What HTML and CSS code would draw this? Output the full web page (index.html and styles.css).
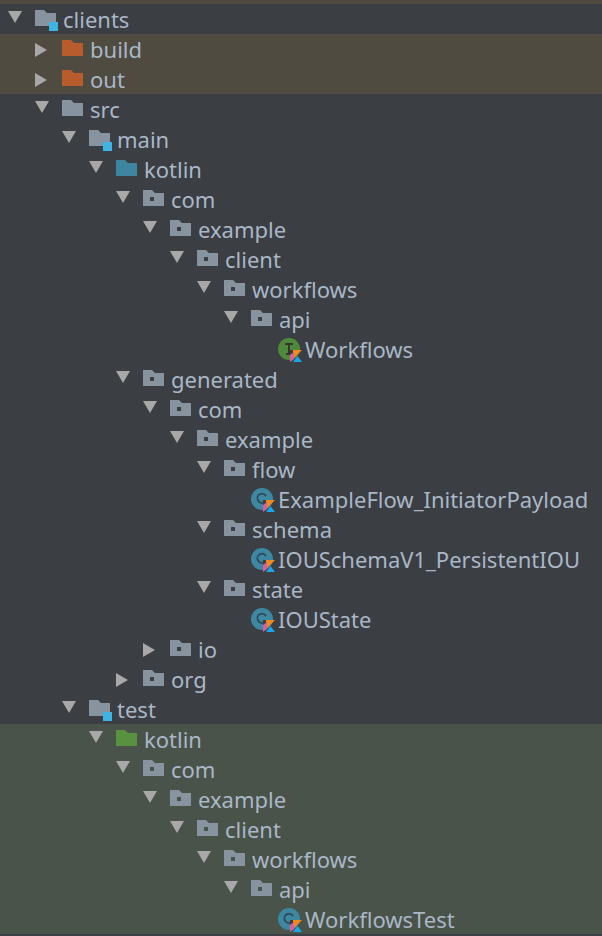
FILE: index.html
```html
<!DOCTYPE html>
<html lang="en">
<head>
    <meta charset="UTF-8">
    <title>Project tree</title>
    <link rel="stylesheet" href="styles.css">
</head>
<body>
    <svg class="defs" width="0" height="0">
        <defs>
            <symbol id="folder" viewBox="0 0 21 16">
                <path d="M0 0H9L12 3H21V16H0Z"/>
            </symbol>
            <symbol id="package" viewBox="0 0 21 16">
                <path fill-rule="evenodd" d="M0 0H9L12 3H21V16H0ZM7 7V11H11V7Z"/>
            </symbol>
            <symbol id="kotlin" viewBox="0 0 12 12">
                <path fill="#3b3e43" d="M0 0H4V5L0 7Z"/>
                <path fill="#18a7e8" d="M3 12L7.5 6L12 12Z"/>
                <path fill="#f08a1d" d="M3 0H12L3 9Z"/>
                <path fill="#d9609f" d="M0 5L4 2V9L0 12Z"/>
            </symbol>
            <symbol id="class-c" viewBox="0 0 24 24">
                <circle cx="11" cy="11" r="11" fill="#3d87a3"/>
                <path fill="none" stroke="#2f4a58" stroke-width="1.8" d="M15 8A4.6 4.6 0 1 0 13 14.5"/>
                <use href="#kotlin" x="12" y="12" width="12" height="12"/>
            </symbol>
            <symbol id="class-i" viewBox="0 0 24 24">
                <circle cx="11" cy="11" r="11" fill="#4f8a3c"/>
                <path fill="none" stroke="#33372f" stroke-width="2" d="M7 6H15M11 6V16M8 16H14"/>
                <use href="#kotlin" x="12" y="12" width="12" height="12"/>
            </symbol>
        </defs>
    </svg>

    <div class="tree">
        <div class="row d0"><span class="arrow down"></span><svg class="icon plain"><use href="#folder"/></svg><i class="module"></i><span class="label">clients</span></div>
        <div class="row d1 excluded"><span class="arrow right"></span><svg class="icon orange"><use href="#folder"/></svg><span class="label">build</span></div>
        <div class="row d1 excluded"><span class="arrow right"></span><svg class="icon orange"><use href="#folder"/></svg><span class="label">out</span></div>
        <div class="row d1"><span class="arrow down"></span><svg class="icon plain"><use href="#folder"/></svg><span class="label">src</span></div>
        <div class="row d2"><span class="arrow down"></span><svg class="icon plain"><use href="#folder"/></svg><i class="module"></i><span class="label">main</span></div>
        <div class="row d3"><span class="arrow down"></span><svg class="icon source"><use href="#folder"/></svg><span class="label">kotlin</span></div>
        <div class="row d4"><span class="arrow down"></span><svg class="icon plain"><use href="#package"/></svg><span class="label">com</span></div>
        <div class="row d5"><span class="arrow down"></span><svg class="icon plain"><use href="#package"/></svg><span class="label">example</span></div>
        <div class="row d6"><span class="arrow down"></span><svg class="icon plain"><use href="#package"/></svg><span class="label">client</span></div>
        <div class="row d7"><span class="arrow down"></span><svg class="icon plain"><use href="#package"/></svg><span class="label">workflows</span></div>
        <div class="row d8"><span class="arrow down"></span><svg class="icon plain"><use href="#package"/></svg><span class="label">api</span></div>
        <div class="row d9"><span class="arrow"></span><svg class="file"><use href="#class-i"/></svg><span class="label">Workflows</span></div>
        <div class="row d4"><span class="arrow down"></span><svg class="icon plain"><use href="#package"/></svg><span class="label">generated</span></div>
        <div class="row d5"><span class="arrow down"></span><svg class="icon plain"><use href="#package"/></svg><span class="label">com</span></div>
        <div class="row d6"><span class="arrow down"></span><svg class="icon plain"><use href="#package"/></svg><span class="label">example</span></div>
        <div class="row d7"><span class="arrow down"></span><svg class="icon plain"><use href="#package"/></svg><span class="label">flow</span></div>
        <div class="row d8"><span class="arrow"></span><svg class="file"><use href="#class-c"/></svg><span class="label">ExampleFlow_InitiatorPayload</span></div>
        <div class="row d7"><span class="arrow down"></span><svg class="icon plain"><use href="#package"/></svg><span class="label">schema</span></div>
        <div class="row d8"><span class="arrow"></span><svg class="file"><use href="#class-c"/></svg><span class="label">IOUSchemaV1_PersistentIOU</span></div>
        <div class="row d7"><span class="arrow down"></span><svg class="icon plain"><use href="#package"/></svg><span class="label">state</span></div>
        <div class="row d8"><span class="arrow"></span><svg class="file"><use href="#class-c"/></svg><span class="label">IOUState</span></div>
        <div class="row d5"><span class="arrow right"></span><svg class="icon plain"><use href="#package"/></svg><span class="label">io</span></div>
        <div class="row d4"><span class="arrow right"></span><svg class="icon plain"><use href="#package"/></svg><span class="label">org</span></div>
        <div class="row d2"><span class="arrow down"></span><svg class="icon plain"><use href="#folder"/></svg><i class="module"></i><span class="label">test</span></div>
        <div class="row d3 tests"><span class="arrow down"></span><svg class="icon green"><use href="#folder"/></svg><span class="label">kotlin</span></div>
        <div class="row d4 tests"><span class="arrow down"></span><svg class="icon plain"><use href="#package"/></svg><span class="label">com</span></div>
        <div class="row d5 tests"><span class="arrow down"></span><svg class="icon plain"><use href="#package"/></svg><span class="label">example</span></div>
        <div class="row d6 tests"><span class="arrow down"></span><svg class="icon plain"><use href="#package"/></svg><span class="label">client</span></div>
        <div class="row d7 tests"><span class="arrow down"></span><svg class="icon plain"><use href="#package"/></svg><span class="label">workflows</span></div>
        <div class="row d8 tests"><span class="arrow down"></span><svg class="icon plain"><use href="#package"/></svg><span class="label">api</span></div>
        <div class="row d9 tests"><span class="arrow"></span><svg class="file"><use href="#class-c"/></svg><span class="label">WorkflowsTest</span></div>
    </div>
</body>
</html>
```

FILE: styles.css
```css
html, body {
    margin: 0;
    height: 100%;
    overflow: hidden;
}
body {
    background: #3b3e43;
    font-family: "Noto Sans", sans-serif;
    font-size: 22px;
    color: #a9b7c6;
}
.defs {
    display: block;
    height: 0;
}
.tree {
    border-top: 4px solid #4f4b41;
}
.row {
    display: flex;
    align-items: center;
    height: 30px;
    line-height: 30px;
    white-space: nowrap;
    position: relative;
}
.excluded {
    background: #4f4b41;
}
.tests {
    background: #4a5349;
}
.d0 { padding-left: 8px; }
.d1 { padding-left: 35px; }
.d2 { padding-left: 62px; }
.d3 { padding-left: 89px; }
.d4 { padding-left: 116px; }
.d5 { padding-left: 143px; }
.d6 { padding-left: 170px; }
.d7 { padding-left: 197px; }
.d8 { padding-left: 224px; }
.d9 { padding-left: 251px; }
.arrow {
    flex: none;
    width: 27px;
    height: 14px;
}
.arrow.down {
    width: 0;
    height: 0;
    margin-right: 13px;
    margin-top: -4px;
    border-left: 7px solid transparent;
    border-right: 7px solid transparent;
    border-top: 12px solid #a8a8a8;
}
.arrow.right {
    width: 0;
    height: 0;
    margin-right: 15px;
    margin-top: 2px;
    border-top: 7px solid transparent;
    border-bottom: 7px solid transparent;
    border-left: 12px solid #a8a8a8;
}
.icon {
    flex: none;
    width: 21px;
    height: 16px;
    margin-top: -2px;
    margin-right: 7px;
}
.plain { fill: #87939e; }
.orange { fill: #b85c2e; }
.source { fill: #3e86a0; }
.green { fill: #58923f; }
.file {
    flex: none;
    width: 24px;
    height: 24px;
    margin-top: 2px;
    margin-right: 3px;
}
/* little blue square on module folders */
.module {
    position: absolute;
    width: 9px;
    height: 9px;
    margin-left: 41px;
    margin-top: 14px;
    background: #3db4e4;
}
```
